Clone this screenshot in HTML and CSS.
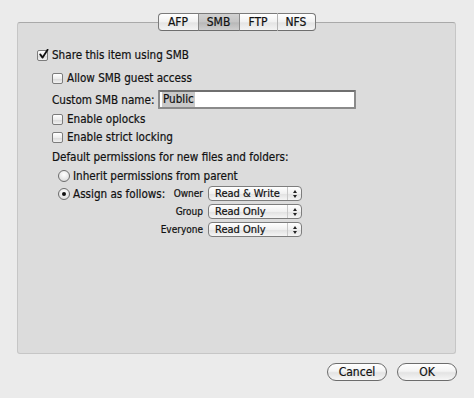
FILE: index.html
```html
<!DOCTYPE html>
<html>
<head>
<meta charset="utf-8">
<link rel="stylesheet" href="styles.css">
</head>
<body>
<div class="window">
  <div class="tabs">
    <div class="tab t1">AFP</div>
    <div class="tab t2 selected">SMB</div>
    <div class="tab t3">FTP</div>
    <div class="tab t4">NFS</div>
  </div>
  <div class="box">
    <div class="row r-share">
      <span class="cb checked"><svg viewBox="0 0 11 11" width="11" height="11"><path d="M2.2 5.4 L4.6 8.6 L9.6 0.8" fill="none" stroke="#111" stroke-width="1.8" stroke-linecap="round" stroke-linejoin="round"/></svg></span>
      <span class="txt">Share this item using SMB</span>
    </div>
    <div class="sub">
      <div class="row r-guest"><span class="cb"></span><span class="txt">Allow SMB guest access</span></div>
      <div class="row r-name">
        <span class="name-label">Custom SMB name:</span>
        <div class="field"><span class="hl">Public</span></div>
      </div>
      <div class="row r-oplocks"><span class="cb"></span><span class="txt">Enable oplocks</span></div>
      <div class="row r-strict"><span class="cb"></span><span class="txt">Enable strict locking</span></div>
      <div class="row r-default"><span>Default permissions for new files and folders:</span></div>
      <div class="perms">
        <div class="row r-inherit"><span class="radio"></span><span class="txt">Inherit permissions from parent</span></div>
        <div class="prow">
          <span class="radio on"></span><span class="txt">Assign as follows:</span>
          <span class="plabel first">Owner</span>
          <div class="popup"><span>Read &amp; Write</span><span class="arrows"><i class="up"></i><i class="down"></i></span></div>
        </div>
        <div class="prow">
          <span class="plabel">Group</span>
          <div class="popup"><span>Read Only</span><span class="arrows"><i class="up"></i><i class="down"></i></span></div>
        </div>
        <div class="prow">
          <span class="plabel">Everyone</span>
          <div class="popup"><span>Read Only</span><span class="arrows"><i class="up"></i><i class="down"></i></span></div>
        </div>
      </div>
    </div>
  </div>
  <div class="buttons">
    <div class="btn">Cancel</div>
    <div class="btn">OK</div>
  </div>
</div>
</body>
</html>
```
FILE: styles.css
```css
html, body {
  margin: 0;
  padding: 0;
}
body {
  width: 474px;
  height: 398px;
  background: #ebebeb;
  font-family: "DejaVu Sans Condensed", "DejaVu Sans", "Liberation Sans", sans-serif;
  font-size: 11.6px;
  color: #111;
  overflow: hidden;
  white-space: nowrap;
  -webkit-text-stroke: 0.2px #111;
}
.window {
  padding: 13px 18px 0 17px;
}
.tabs {
  display: flex;
  justify-content: center;
  position: relative;
  z-index: 2;
  height: 18px;
}
.tab {
  height: 16px;
  border-top: 1px solid #7a7a7a;
  border-bottom: 1px solid #6e6e6e;
  border-left: 1px solid #b4b4b4;
  background: linear-gradient(#ffffff, #f1f1f1 50%, #e4e4e4 55%, #f4f4f4);
  display: flex;
  align-items: center;
  justify-content: center;
  font-size: 12px;
  color: #111;
}
.t1 { width: 39px; border-left: 1px solid #7a7a7a; border-radius: 4px 0 0 4px; }
.t2 { width: 40px; }
.t3 { width: 37px; }
.t4 { width: 37px; border-right: 1px solid #7a7a7a; border-radius: 0 4px 4px 0; }
.tab.selected {
  background: linear-gradient(#d2d2d2, #c4c4c4 50%, #b8b8b8 55%, #cfcfcf);
  border-left-color: #8a8a8a;
}
.tab.selected + .tab { border-left-color: #8a8a8a; }

.box {
  margin-top: -9px;
  height: 332px;
  box-sizing: border-box;
  background: #dcdcdc;
  border: 1px solid #c6c6c6;
  border-top-color: #a9a9a9;
  border-radius: 3px;
  padding: 25px 0 0 19px;
}
.row {
  display: flex;
  align-items: center;
  height: 14px;
}
.cb {
  width: 11px;
  height: 11px;
  box-sizing: border-box;
  border: 1px solid #7c7c7c;
  border-radius: 2px;
  background: linear-gradient(#ffffff, #ededed 50%, #dadada 55%, #f2f2f2);
  flex: none;
  position: relative;
}
.cb svg {
  position: absolute;
  left: 0;
  top: -2px;
}
.r-share .txt { margin-left: 4px; }
.sub {
  margin-left: 15px;
}
.r-guest { margin-top: 9px; }
.r-guest .txt, .r-oplocks .txt, .r-strict .txt { margin-left: 4px; }
.r-name {
  margin-top: 5px;
  height: 19px;
}
.name-label {
  width: 106px;
  flex: none;
}
.field {
  width: 198px;
  height: 19px;
  box-sizing: border-box;
  border: 2px solid #8a8a8a;
  border-top-color: #6f6f6f;
  border-radius: 1px;
  background: #ffffff;
  display: flex;
  align-items: center;
  padding-left: 2px;
}
.hl {
  background: #c9c9c9;
  padding: 1px 1px;
  line-height: 13px;
}
.r-oplocks { margin-top: 3px; }
.r-strict { margin-top: 4px; }
.r-default { margin-top: 6px; }
.perms {
  margin-left: 6px;
  width: 244px;
}
.r-inherit { margin-top: 5px; }
.radio {
  width: 12px;
  height: 12px;
  box-sizing: border-box;
  border: 1px solid #6d6d6d;
  border-radius: 50%;
  background: radial-gradient(circle at 50% 35%, #ffffff, #e6e6e6 60%, #cfcfcf);
  flex: none;
  position: relative;
}
.radio.on::after {
  content: "";
  position: absolute;
  left: 3px;
  top: 3px;
  width: 4px;
  height: 4px;
  border-radius: 50%;
  background: #111;
}
.r-inherit .txt, .prow .txt { margin-left: 3px; }
.prow {
  display: flex;
  align-items: center;
  justify-content: flex-end;
  height: 15px;
  margin-top: 3px;
}
.plabel {
  font-size: 10px;
  margin-right: 5px;
}
.plabel.first { margin-left: auto; }
.popup {
  width: 94px;
  height: 15px;
  box-sizing: border-box;
  border: 1px solid #7d7d7d;
  border-radius: 4px;
  background: linear-gradient(#ffffff, #f0f0f0 50%, #e2e2e2 55%, #f5f5f5);
  display: flex;
  align-items: center;
  justify-content: space-between;
  padding-left: 6px;
  font-size: 11px;
  flex: none;
}
.arrows {
  width: 13px;
  height: 13px;
  border-left: 1px solid #c8c8c8;
  display: flex;
  flex-direction: column;
  align-items: center;
  justify-content: center;
  gap: 2px;
}
.arrows i {
  display: block;
  width: 0;
  height: 0;
  border-left: 2px solid transparent;
  border-right: 2px solid transparent;
}
.arrows .up { border-bottom: 3px solid #222; }
.arrows .down { border-top: 3px solid #222; }
.buttons {
  display: flex;
  justify-content: flex-end;
  gap: 10px;
  margin-top: 9px;
  margin-right: -1px;
}
.btn {
  width: 60px;
  height: 18px;
  box-sizing: border-box;
  border: 1px solid #6c6c6c;
  border-radius: 9px;
  background: linear-gradient(#ffffff, #f3f3f3 45%, #e3e3e3 55%, #f6f6f6);
  display: flex;
  align-items: center;
  justify-content: center;
  font-size: 12px;
  color: #111;
}
```
